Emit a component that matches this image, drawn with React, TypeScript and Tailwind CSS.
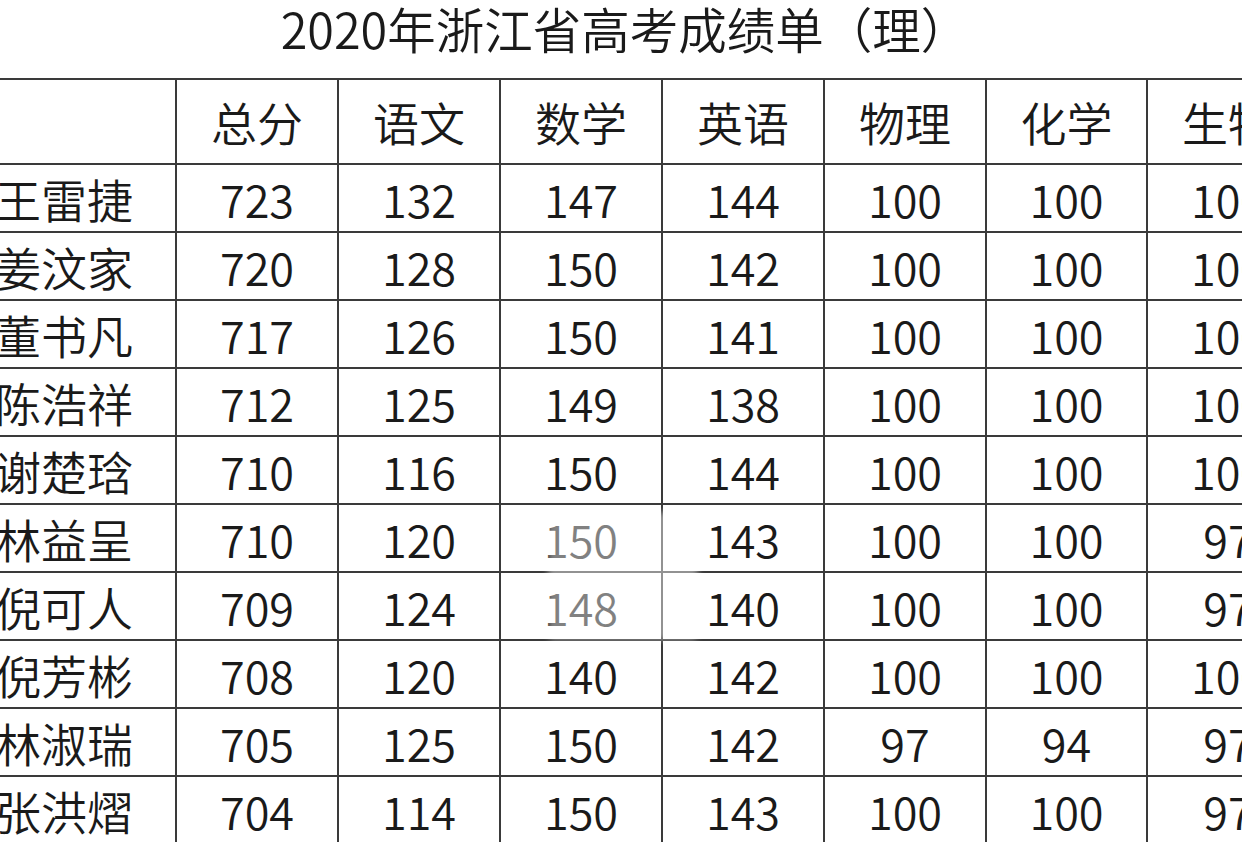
import React from "react";

const headers = ["", "总分", "语文", "数学", "英语", "物理", "化学", "生物"];
const rows: string[][] = [
  ["王雷捷", "723", "132", "147", "144", "100", "100", "100"],
  ["姜汶家", "720", "128", "150", "142", "100", "100", "100"],
  ["董书凡", "717", "126", "150", "141", "100", "100", "100"],
  ["陈浩祥", "712", "125", "149", "138", "100", "100", "100"],
  ["谢楚琀", "710", "116", "150", "144", "100", "100", "100"],
  ["林益呈", "710", "120", "150", "143", "100", "100", "97"],
  ["倪可人", "709", "124", "148", "140", "100", "100", "97"],
  ["倪芳彬", "708", "120", "140", "142", "100", "100", "100"],
  ["林淑瑞", "705", "125", "150", "142", "97", "94", "97"],
  ["张洪熠", "704", "114", "150", "143", "100", "100", "97"],
];

const font = { fontFamily: '"Noto Sans CJK SC", "Noto Sans", sans-serif' };

export default function App() {
  return (
    <div
      className="relative w-[1242px] h-[842px] overflow-hidden bg-white text-[#1a1a1a] font-[350]"
      style={font}
    >
      <div className="h-[78px] flex items-start justify-center pt-[0px] pl-[8px] text-[48.5px] leading-[56px]">
        2020年浙江省高考成绩单（理）
      </div>
      <div className="w-[1400px] border-t-2 border-[#3a3a3a] grid grid-cols-[177px_162px_162px_162px_162px_162px_161px_162px]">
        {headers.map((h, i) => (
          <div
            key={"h" + i}
            className="h-[85px] border-r-2 border-b-2 border-[#3a3a3a] flex items-center justify-center text-[46px] leading-none pb-[2px]"
          >
            {h}
          </div>
        ))}
        {rows.map((r, ri) =>
          r.map((c, ci) => (
            <div
              key={ri + "-" + ci}
              className={
                "h-[68px] border-r-2 border-b-2 border-[#3a3a3a] flex items-center text-[45px] leading-none whitespace-nowrap overflow-hidden " +
                (ci === 0 ? "justify-end pr-[42px] text-[46px]" : "justify-center")
              }
            >
              {c}
            </div>
          ))
        )}
      </div>
      <div className="absolute left-[548px] top-[512px] w-[150px] h-[128px] bg-white/45 blur-[3px] rounded-md pointer-events-none" />
    </div>
  );
}
